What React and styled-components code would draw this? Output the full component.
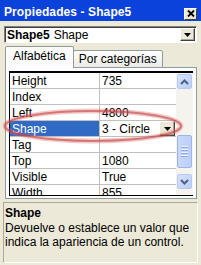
import React from "react";
import styled, { createGlobalStyle } from "styled-components";

const GlobalStyle = createGlobalStyle`
    html, body {
        margin: 0;
        padding: 0;
        background: #ece9d8;
    }
`

const Window = styled.div`
    position: relative;
    width: 201px;
    height: 265px;
    background: #ece9d8;
    font-family: "Liberation Sans", Arial, sans-serif;
    font-size: 11px;
    color: #000;
    overflow: hidden;
    display: flex;
    flex-direction: column;
`

const TitleBar = styled.div`
    height: 21px;
    background: #0c42dc;
    display: flex;
    align-items: center;
    justify-content: space-between;
    padding: 2px 4px 0 4px;
    box-sizing: border-box;
    color: #fff;
    font-weight: bold;
    font-size: 12px;
    letter-spacing: 0.1px;
`

const CloseButton = styled.div`
    width: 13px;
    height: 12px;
    margin-top: 4px;
    background: #ece9d8;
    border: 1px solid;
    border-color: #fff #404040 #404040 #fff;
    box-sizing: border-box;
    display: flex;
    align-items: center;
    justify-content: center;
`

const Combo = styled.div`
    margin: 5px 4px 0 4px;
    height: 17px;
    background: #fff;
    border: 1px solid;
    border-color: #808080 #fff #fff #808080;
    box-shadow: inset 1px 1px 0 #404040;
    box-sizing: border-box;
    display: flex;
    align-items: center;
    padding-left: 2px;
    font-size: 12px;
`

const ComboText = styled.div`
    flex: 1;
    b {
        margin-right: 4px;
    }
`

const DropButton = styled.div`
    width: ${p => p.w || 15}px;
    height: ${p => p.h || 13}px;
    background: #ece9d8;
    border: 1px solid;
    border-color: #fff #404040 #404040 #fff;
    box-shadow: inset -1px -1px 0 #aca899;
    box-sizing: border-box;
    display: flex;
    align-items: center;
    justify-content: center;
    margin-right: 1px;
`

const Tabs = styled.div`
    display: flex;
    align-items: flex-end;
    margin: 3px 0 0 5px;
    height: 22px;
`

const Tab = styled.div`
    height: ${p => (p.active ? 22 : 18)}px;
    padding: 0 ${p => (p.active ? 7 : 5)}px;
    box-sizing: border-box;
    border: 1px solid #919b9c;
    border-bottom: ${p => (p.active ? "none" : "1px solid #919b9c")};
    border-radius: 2px 2px 0 0;
    background: ${p => (p.active ? "#fcfcfe" : "linear-gradient(#fefefe, #ecebe6)")};
    display: flex;
    align-items: center;
    margin-left: ${p => (p.active ? 0 : -1)}px;
    position: relative;
    z-index: ${p => (p.active ? 2 : 1)};
    padding-bottom: ${p => (p.active ? 3 : 0)}px;
    font-size: 12px;
`

const Panel = styled.div`
    margin: -1px 4px 0 5px;
    height: 132px;
    border: 1px solid #919b9c;
    background: #fcfcfe;
    box-sizing: border-box;
    padding: 3px 3px 0 3px;
    display: flex;
`

const Grid = styled.div`
    flex: 1;
    height: 122px;
    border: 1px solid #000;
    border-right: none;
    border-top: 2px solid #000;
    display: flex;
    overflow: hidden;
    background: #fff;
`

const Rows = styled.div`
    flex: 1;
    display: flex;
    flex-direction: column;
`

const Row = styled.div`
    display: flex;
    height: 16px;
    flex-shrink: 0;
    border-bottom: 1px solid #c0c0c0;
    box-sizing: border-box;
`

const NameCell = styled.div`
    width: 87px;
    flex-shrink: 0;
    padding-left: 2px;
    border-right: 1px solid #c0c0c0;
    display: flex;
    align-items: center;
    background: ${p => (p.selected ? "#316ac5" : "transparent")};
    color: ${p => (p.selected ? "#fff" : "#000")};
    font-size: 12px;
`

const ValueCell = styled.div`
    flex: 1;
    padding-left: 2px;
    display: flex;
    align-items: center;
    justify-content: space-between;
    font-size: 12px;
`

const ScrollBar = styled.div`
    width: 17px;
    background: #f4f3ee;
    display: flex;
    flex-direction: column;
    align-items: center;
    padding: 0 1px;
    box-sizing: border-box;
`

const ScrollButton = styled.div`
    width: 15px;
    height: 15px;
    border: 1px solid #b6c8f3;
    border-radius: 2px;
    background: linear-gradient(135deg, #d6e3fd, #b9cdf6);
    box-sizing: border-box;
    display: flex;
    align-items: center;
    justify-content: center;
    margin-top: ${p => p.mt || 0}px;
`

const Thumb = styled.div`
    width: 15px;
    height: 33px;
    margin-top: ${p => p.mt}px;
    border: 1px solid #9fb4e6;
    border-radius: 2px;
    background: linear-gradient(90deg, #c9d8fb, #bccffa);
    box-sizing: border-box;
    display: flex;
    flex-direction: column;
    align-items: center;
    justify-content: center;
    gap: 1px;
`

const Grip = styled.div`
    width: 7px;
    height: 1px;
    background: #eef3fe;
    border-bottom: 1px solid #8da7e4;
`

const Description = styled.div`
    margin: 3px 3px 0 3px;
    height: 61px;
    border: 1px solid;
    border-color: #aca899 #fff #fff #aca899;
    box-sizing: border-box;
    padding: 3px 1px;
    line-height: 14px;
    font-size: 12px;
`

const DescTitle = styled.div`
    font-weight: bold;
    margin-bottom: 1px;
`

const Highlight = styled.svg`
    position: absolute;
    left: 0;
    top: 0;
    pointer-events: none;
`

const Arrow = ({ down }) => (
    <svg width="9" height="6" viewBox="0 0 9 6">
        <path d={down ? "M1 1 L4.5 4.5 L8 1" : "M1 5 L4.5 1.5 L8 5"} fill="none" stroke="#4d6185" strokeWidth="2" />
    </svg>
)

const Caret = () => (
    <svg width="7" height="4" viewBox="0 0 7 4">
        <path d="M0 0 H7 L3.5 4 Z" fill="#000" />
    </svg>
)

const props = [
    { name: "Height", value: "735" },
    { name: "Index", value: "" },
    { name: "Left", value: "4800" },
    { name: "Shape", value: "3 - Circle", selected: true },
    { name: "Tag", value: "" },
    { name: "Top", value: "1080" },
    { name: "Visible", value: "True" },
    { name: "Width", value: "855" },
]

const App = () => {
    return (
        <Window>
            <GlobalStyle />
            <TitleBar>
                <span>Propiedades - Shape5</span>
                <CloseButton>
                    <svg width="8" height="7" viewBox="0 0 8 7">
                        <path d="M1 0.5 L7 6.5 M7 0.5 L1 6.5" stroke="#000" strokeWidth="1.8" />
                    </svg>
                </CloseButton>
            </TitleBar>
            <Combo>
                <ComboText>
                    <b>Shape5</b>Shape
                </ComboText>
                <DropButton>
                    <Caret />
                </DropButton>
            </Combo>
            <Tabs>
                <Tab active>Alfabética</Tab>
                <Tab>Por categorías</Tab>
            </Tabs>
            <Panel>
                <Grid>
                    <Rows>
                        {props.map(p => (
                            <Row key={p.name}>
                                <NameCell selected={p.selected}>{p.name}</NameCell>
                                <ValueCell>
                                    {p.value}
                                    {p.selected && (
                                        <DropButton w={16} h={15}>
                                            <Caret />
                                        </DropButton>
                                    )}
                                </ValueCell>
                            </Row>
                        ))}
                    </Rows>
                    <ScrollBar>
                        <ScrollButton mt={1}>
                            <Arrow />
                        </ScrollButton>
                        <Thumb mt={46}>
                            <Grip />
                            <Grip />
                            <Grip />
                            <Grip />
                        </Thumb>
                        <ScrollButton mt={6}>
                            <Arrow down />
                        </ScrollButton>
                    </ScrollBar>
                </Grid>
            </Panel>
            <Description>
                <DescTitle>Shape</DescTitle>
                Devuelve o establece un valor que indica la apariencia de un control.
            </Description>
            <Highlight width="201" height="265">
                <ellipse cx="93" cy="126" rx="88" ry="15" fill="none" stroke="rgba(215,110,110,0.35)" strokeWidth="5" />
                <ellipse cx="93" cy="126" rx="88" ry="15" fill="none" stroke="rgba(200,60,60,0.6)" strokeWidth="2" />
            </Highlight>
        </Window>
    )
}

export default App
